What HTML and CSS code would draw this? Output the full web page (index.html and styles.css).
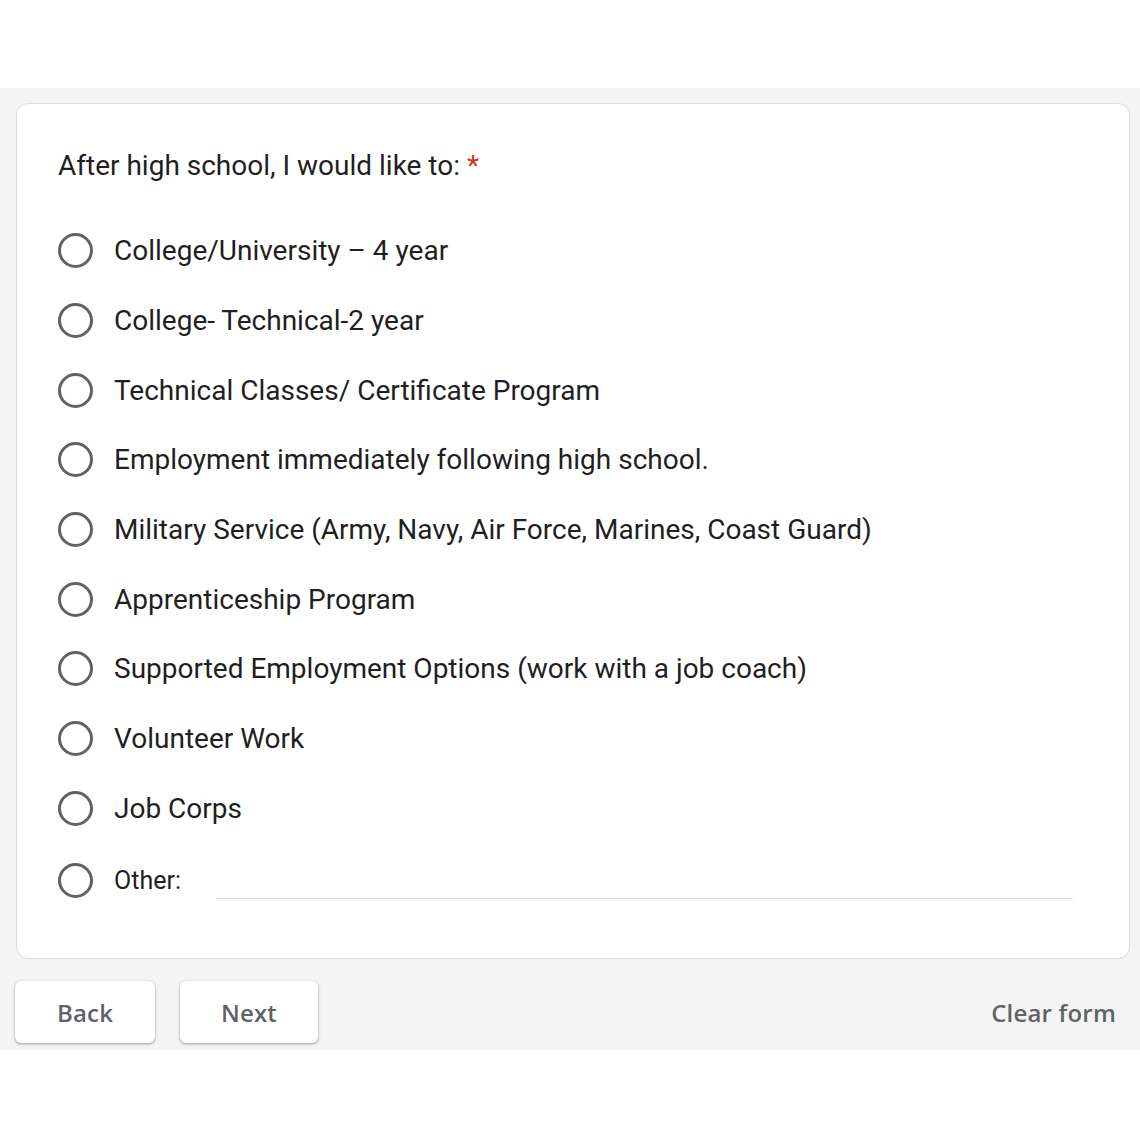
FILE: index.html
```html
<!DOCTYPE html>
<html>
<head>
<meta charset="utf-8">
<link rel="stylesheet" href="styles.css">
</head>
<body>
<div class="page">
  <div class="card">
    <div class="question">After high school, I would like to: <span class="req">*</span></div>
    <div class="options">
      <div class="opt"><span class="radio"></span><span class="label">College/University – 4 year</span></div>
      <div class="opt"><span class="radio"></span><span class="label">College- Technical-2 year</span></div>
      <div class="opt"><span class="radio"></span><span class="label">Technical Classes/ Certificate Program</span></div>
      <div class="opt"><span class="radio"></span><span class="label">Employment immediately following high school.</span></div>
      <div class="opt"><span class="radio"></span><span class="label">Military Service (Army, Navy, Air Force, Marines, Coast Guard)</span></div>
      <div class="opt"><span class="radio"></span><span class="label">Apprenticeship Program</span></div>
      <div class="opt"><span class="radio"></span><span class="label">Supported Employment Options (work with a job coach)</span></div>
      <div class="opt"><span class="radio"></span><span class="label">Volunteer Work</span></div>
      <div class="opt"><span class="radio"></span><span class="label">Job Corps</span></div>
      <div class="opt other"><span class="radio"></span><span class="label small">Other:</span><span class="line"></span></div>
    </div>
  </div>
  <div class="actions">
    <div class="btns">
      <div class="btn back">Back</div>
      <div class="btn next">Next</div>
    </div>
    <div class="clear">Clear form</div>
  </div>
</div>
</body>
</html>
```

FILE: styles.css
```css
html, body {
  margin: 0;
  padding: 0;
  background: #ffffff;
}
body {
  font-family: Roboto, "Liberation Sans", Arial, sans-serif;
  color: #1f1f1f;
}
.page {
  margin-top: 88px;
  height: 962px;
  box-sizing: border-box;
  background: #f4f4f4;
  padding: 15px 10px 0 16px;
}
.card {
  background: #ffffff;
  border: 1px solid #dadce0;
  border-radius: 12px;
  height: 856px;
  box-sizing: border-box;
  padding: 42px 0 0 41px;
}
.question {
  font-size: 28px;
  line-height: 40px;
}
.req {
  color: #d93025;
}
.options {
  margin-top: 30px;
  display: flex;
  flex-direction: column;
}
.opt {
  display: flex;
  align-items: center;
  height: 69.7px;
}
.radio {
  width: 35px;
  height: 35px;
  box-sizing: border-box;
  border: 3px solid #5f6368;
  border-radius: 50%;
  flex: none;
}
.label {
  margin-left: 21px;
  font-size: 28px;
}
.label.small {
  font-size: 25px;
}
.opt.other {
  height: 74px;
}
.line {
  flex: none;
  width: 857px;
  height: 1px;
  background: #dadce0;
  margin-left: 35px;
  align-self: flex-end;
  margin-bottom: 18px;
}
.actions {
  display: flex;
  justify-content: space-between;
  align-items: center;
  margin-top: 22px;
  padding-right: 14px;
}
.btns {
  display: flex;
  gap: 25px;
  margin-left: -1px;
}
.btn {
  height: 62px;
  box-sizing: border-box;
  background: #ffffff;
  border-radius: 6px;
  box-shadow: 0 1px 2px rgba(60,64,67,0.30), 0 1px 3px 1px rgba(60,64,67,0.15);
  display: flex;
  align-items: center;
  justify-content: center;
  font-family: "Open Sans", Roboto, sans-serif;
  font-size: 24px;
  font-weight: 600;
  color: #5f6368;
  letter-spacing: 0.2px;
}
.back { width: 140px; }
.next { width: 138px; }
.clear {
  font-family: "Open Sans", Roboto, sans-serif;
  font-size: 24px;
  font-weight: 600;
  color: #5f6368;
  letter-spacing: 0.2px;
}
```
